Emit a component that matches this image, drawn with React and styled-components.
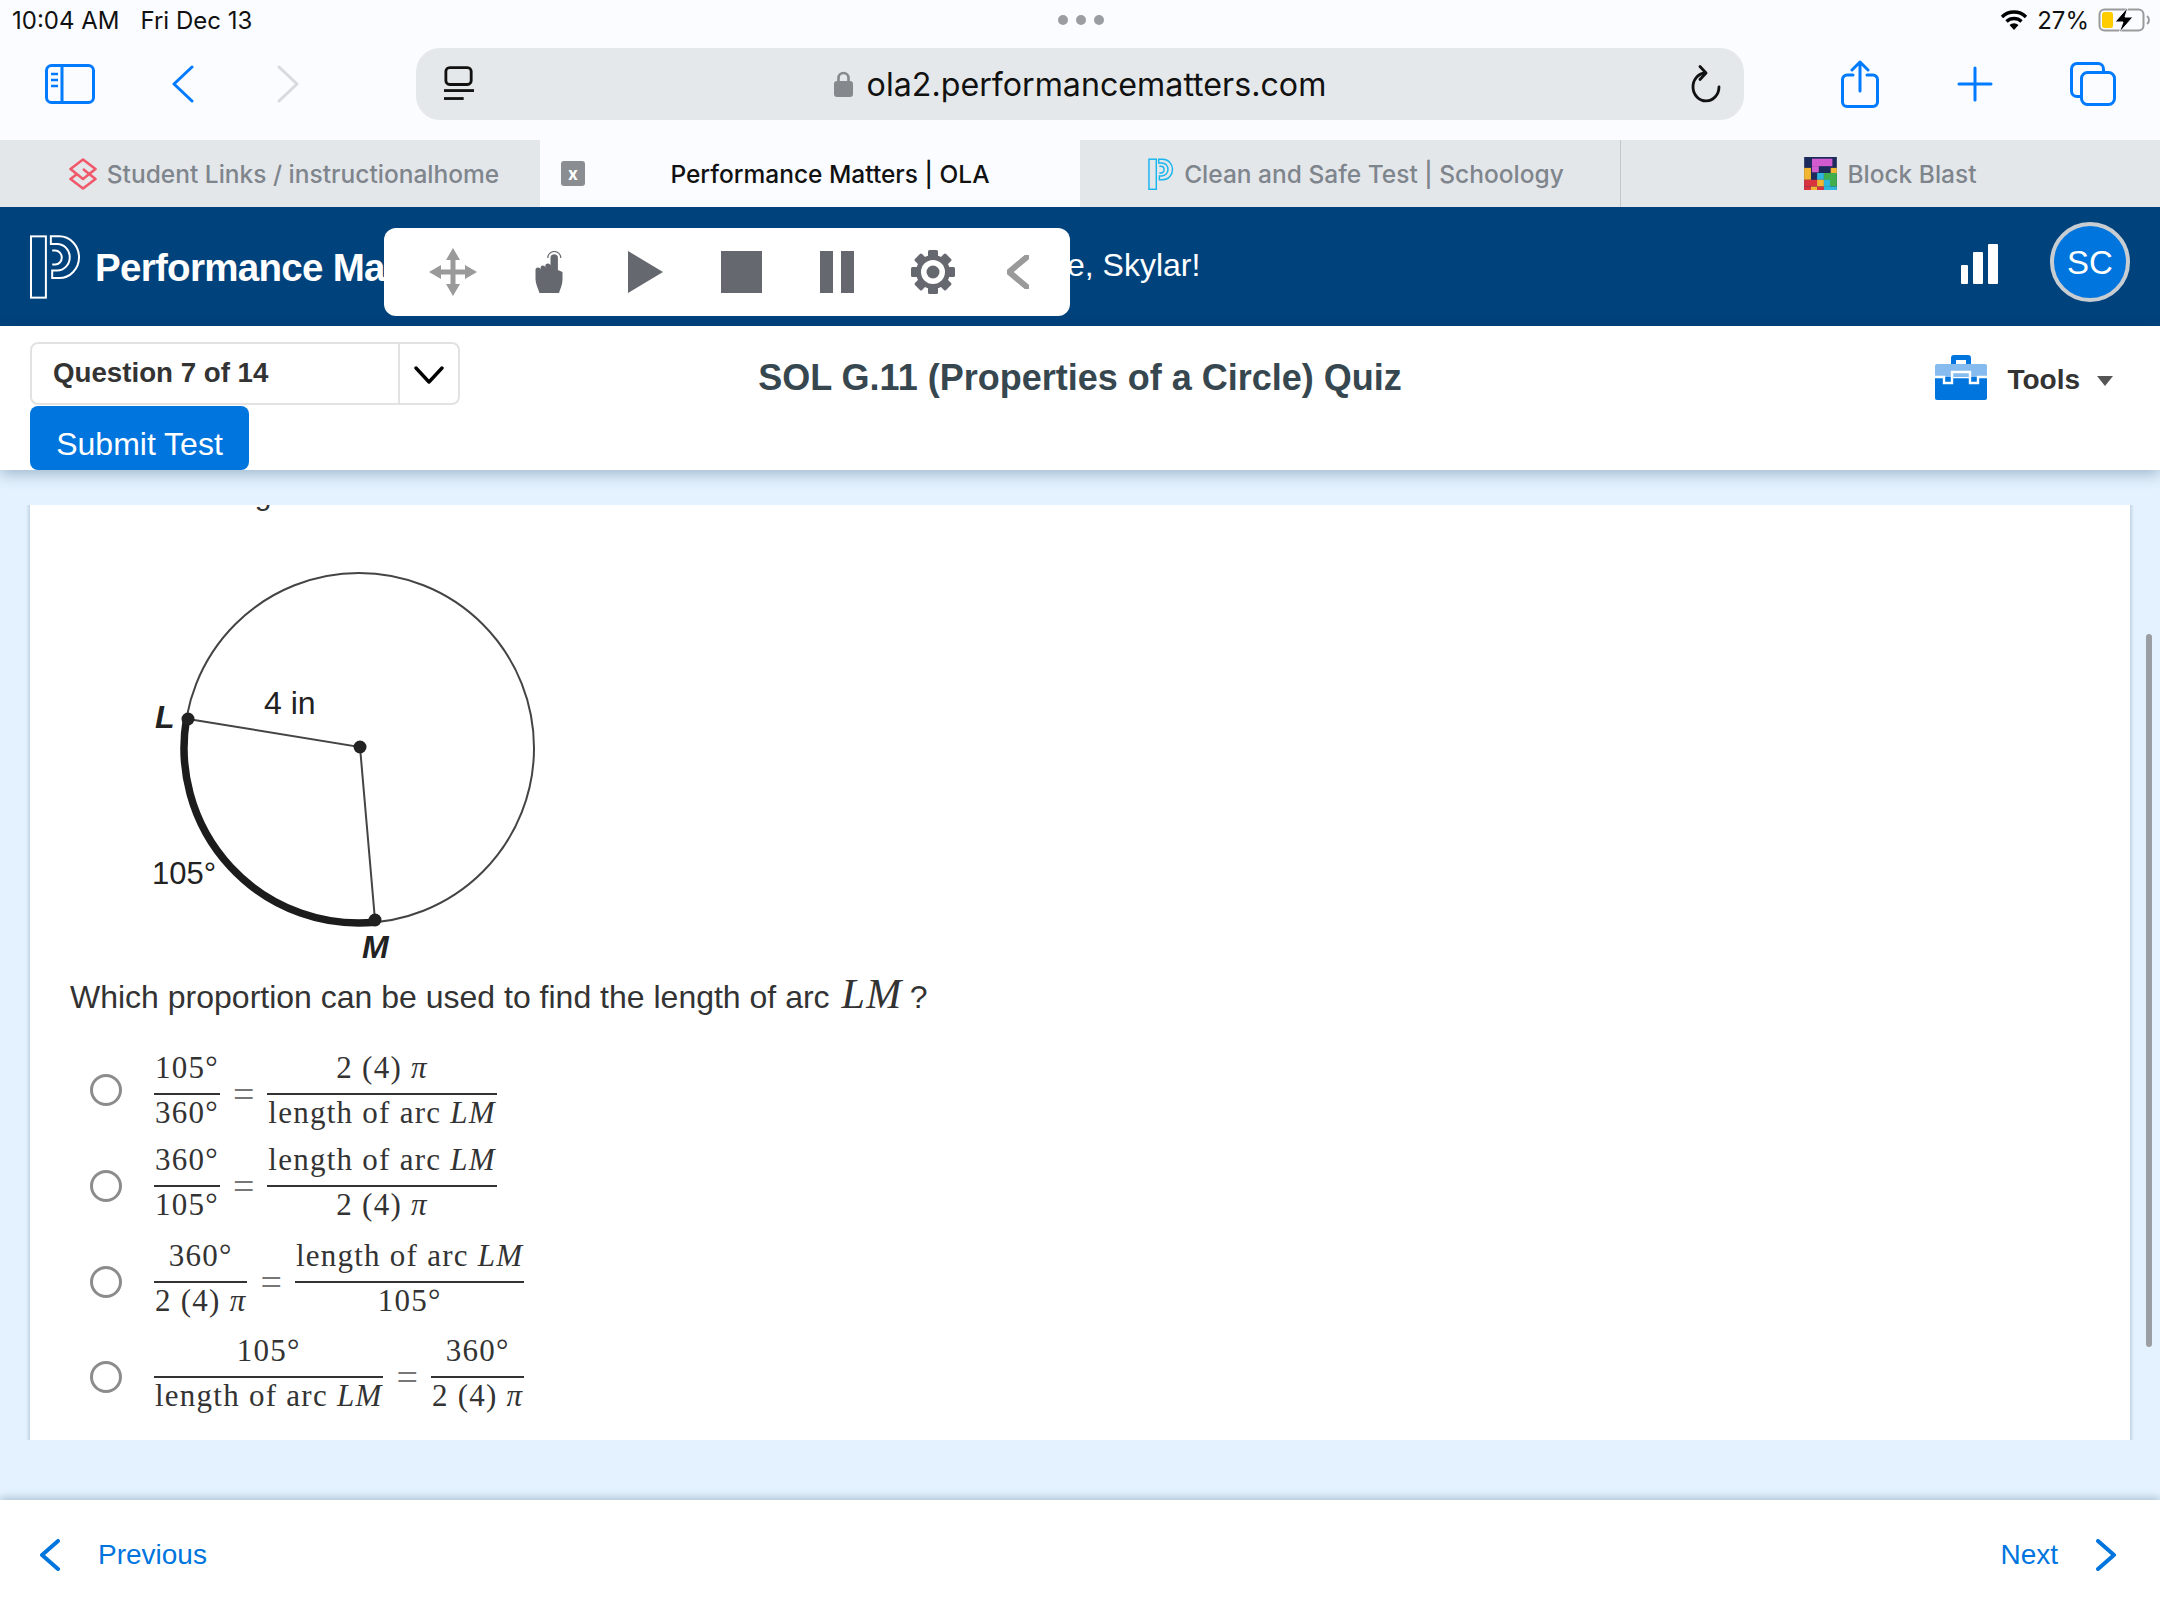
import React from "react";
import styled, { createGlobalStyle } from "styled-components";

const blue = "#0075de";
const safari = "#007aff";

const GlobalStyle = createGlobalStyle`
  html, body {
    margin: 0;
    padding: 0;
    background: #fff;
    font-family: "Liberation Sans", Arial, sans-serif;
  }
`;

const Page = styled.div`
  position: relative;
  width: 2160px;
  height: 1620px;
  display: flex;
  flex-direction: column;
  overflow: hidden;
`;

const StatusBar = styled.div`
  height: 40px;
  flex: none;
  background: #fafcff;
  display: grid;
  grid-template-columns: 1fr auto 1fr;
  align-items: center;
  padding: 0 10px 0 12px;
  font-family: Inter, sans-serif;
  font-size: 24px;
  color: #111;
`;

const StatusLeft = styled.div`
  display: flex;
  gap: 21px;
`;

const Dots = styled.div`
  display: flex;
  gap: 8px;
`;

const Dot = styled.span`
  width: 10px;
  height: 10px;
  border-radius: 50%;
  background: #9a9da1;
`;

const StatusRight = styled.div`
  display: flex;
  justify-content: flex-end;
  align-items: center;
  gap: 9px;
`;

const Toolbar = styled.div`
  height: 100px;
  flex: none;
  box-sizing: border-box;
  background: #fafcff;
  padding-top: 8px;
  display: flex;
  align-items: flex-start;
`;

const ToolIcon = styled.div`
  height: 72px;
  display: flex;
  align-items: center;
  margin-left: ${(p) => p.$gap}px;
`;

const UrlBar = styled.div`
  position: relative;
  width: 1328px;
  height: 72px;
  margin-left: ${(p) => p.$gap}px;
  border-radius: 24px;
  background: #e5e8ea;
  display: grid;
  grid-template-columns: 58px 1fr 58px;
  align-items: center;
`;

const UrlText = styled.div`
  display: flex;
  justify-content: center;
  align-items: center;
  gap: 14px;
  font-family: Inter, sans-serif;
  font-size: 32.2px;
  color: #111;
`;

const TabRow = styled.div`
  height: 67px;
  flex: none;
  display: grid;
  grid-template-columns: repeat(4, 1fr);
`;

const Tab = styled.div`
  position: relative;
  display: flex;
  align-items: center;
  justify-content: center;
  gap: 10px;
  box-sizing: border-box;
  padding-left: ${(p) => p.$offset || 0}px;
  background: ${(p) => (p.$active ? "#fafcff" : "#e4e7ea")};
  color: ${(p) => (p.$active ? "#111" : "#7f858c")};
  border-left: ${(p) => (p.$divider ? "1px solid #c4c7ca" : "none")};
  font-family: Inter, sans-serif;
  font-size: 24.5px;
  font-weight: 500;
`;

const TabClose = styled.span`
  position: absolute;
  left: 21px;
  top: 21px;
  width: 24px;
  height: 25px;
  border-radius: 3px;
  background: #8a8d91;
  color: #fff;
  font-size: 17px;
  font-weight: 700;
  display: flex;
  align-items: center;
  justify-content: center;
`;

const Header = styled.header`
  position: relative;
  height: 119px;
  flex: none;
  background: #00427c;
  color: #fff;
  display: grid;
  grid-template-columns: 952px 1fr auto;
  align-items: center;
  padding-right: 30px;
  box-sizing: border-box;
`;

const Brand = styled.div`
  display: flex;
  align-items: center;
  padding-left: 29px;
  gap: 13px;
  white-space: nowrap;
  font-size: 38.5px;
  font-weight: 700;
  letter-spacing: -0.7px;
`;

const BrandName = styled.span`
  margin-top: 3px;
`;

const Welcome = styled.div`
  font-size: 32px;
  margin-top: -3px;
`;

const HeaderActions = styled.div`
  display: flex;
  align-items: center;
  gap: 52px;
`;

const BarsSlot = styled.div`
  display: flex;
  margin-bottom: 6px;
`;

const Avatar = styled.div`
  width: 80px;
  height: 80px;
  box-sizing: border-box;
  border-radius: 50%;
  border: 4px solid #c8cdd2;
  background: ${blue};
  font-size: 33px;
  padding-top: 3px;
  display: flex;
  align-items: center;
  justify-content: center;
  margin-top: -10px;
`;

const Palette = styled.div`
  position: absolute;
  left: 384px;
  top: 21px;
  width: 686px;
  height: 88px;
  border-radius: 12px;
  background: #fff;
  display: grid;
  grid-template-columns: 21px repeat(6, 96px) 74px;
  align-items: center;
  justify-items: center;
`;

const PaletteCell = styled.div`
  display: flex;
  align-items: center;
  justify-content: center;
  grid-column: ${(p) => p.$col};
`;

const SubBar = styled.div`
  position: relative;
  z-index: 2;
  height: 144px;
  flex: none;
  background: #fff;
  box-shadow: 0 4px 14px rgba(0, 50, 90, 0.3);
  display: grid;
  grid-template-columns: 1fr auto 1fr;
  padding-top: 16px;
  box-sizing: border-box;
`;

const QuestionColumn = styled.div`
  padding-left: 30px;
`;

const QuestionSelect = styled.div`
  width: 430px;
  height: 63px;
  box-sizing: border-box;
  display: flex;
  border: 2px solid #e2e2e2;
  border-radius: 8px;
`;

const QuestionLabel = styled.div`
  flex: 1;
  display: flex;
  align-items: center;
  padding-left: 21px;
  font-size: 27.7px;
  font-weight: 700;
  color: #333;
  margin-top: -2px;
`;

const SelectToggle = styled.div`
  width: 58px;
  display: flex;
  align-items: center;
  justify-content: center;
  padding-top: 3px;
  border-left: 2px solid #e2e2e2;
`;

const SubmitButton = styled.button`
  display: block;
  width: 219px;
  height: 64px;
  margin-top: 1px;
  border: none;
  border-radius: 8px;
  background: ${blue};
  color: #fff;
  font-family: inherit;
  font-size: 32px;
  padding: 13px 0 0;
`;

const QuizTitle = styled.h1`
  margin: 0;
  font-size: 36px;
  line-height: 44px;
  margin-top: 14px;
  font-weight: 700;
  color: #37474f;
`;

const ToolsMenu = styled.div`
  display: flex;
  justify-content: flex-end;
  align-items: flex-start;
  padding: 13px 47px 0 0;
  font-size: 28px;
  font-weight: 700;
  color: #333;
`;

const ToolsLabel = styled.span`
  margin: 9px 17px 0 20px;
`;

const ToolsCaret = styled.span`
  width: 0;
  height: 0;
  margin-top: 21px;
  border-left: 8px solid transparent;
  border-right: 8px solid transparent;
  border-top: 10px solid #555;
`;

const Main = styled.main`
  position: relative;
  flex: 1;
  min-height: 0;
  background: #e3f2fe;
  padding: 35px 26px 60px;
  display: flex;
`;

const ScrollArea = styled.div`
  flex: 1;
  padding: 0 4px;
  overflow: hidden;
`;

const Card = styled.div`
  background: #fff;
  box-shadow: 0 0 5px rgba(0, 40, 80, 0.3);
  height: 1000px;
`;

const ClippedLine = styled.div`
  margin: -28px 0 27px 53px;
  font-size: 30px;
  line-height: 36px;
  color: #333;
`;

const Figure = styled.svg`
  display: block;
  margin-left: 90px;
`;

const Prompt = styled.p`
  margin: -8px 0 0 40px;
  height: 78px;
  font-size: 32px;
  line-height: 44px;
  color: #333;
`;

const PromptVar = styled.i`
  font-family: "Liberation Serif", serif;
  font-size: 42px;
  margin: 0 7px 0 3px;
  letter-spacing: 1.5px;
`;

const OptionRow = styled.div`
  height: ${(p) => p.$height}px;
  display: flex;
  align-items: center;
  padding-left: 60px;
`;

const Radio = styled.span`
  width: 32px;
  height: 32px;
  box-sizing: border-box;
  border-radius: 50%;
  border: 3px solid #8c8c8c;
  margin-top: ${(p) => p.$lift || 0}px;
  margin-right: 32px;
`;

const Equation = styled.div`
  display: flex;
  align-items: center;
  font-family: "Liberation Serif", serif;
  font-size: 31px;
  letter-spacing: 1.25px;
  color: #333;
  white-space: nowrap;
`;

const Fraction = styled.div`
  display: inline-flex;
  flex-direction: column;
  text-align: center;
`;

const Numerator = styled.div`
  padding: 1px 1px 6px;
  line-height: 38px;
  border-bottom: 2px solid #333;
`;

const Denominator = styled.div`
  margin-top: -1px;
  padding: 0 1px 8px;
  line-height: 38px;
`;

const Equals = styled.span`
  margin: 0 13px;
  font-size: 38px;
  color: #777;
  letter-spacing: 0;
  line-height: 1;
`;

const ScrollThumb = styled.div`
  position: absolute;
  right: 8px;
  top: 164px;
  width: 6px;
  height: 713px;
  border-radius: 3px;
  background: #9b9fa3;
`;

const Footer = styled.footer`
  position: relative;
  z-index: 2;
  height: 120px;
  flex: none;
  box-sizing: border-box;
  background: #fff;
  box-shadow: 0 -2px 8px rgba(0, 40, 80, 0.25);
  display: flex;
  justify-content: space-between;
  align-items: center;
  padding: 0 44px 10px 40px;
  color: ${blue};
  font-size: 28px;
`;

const FooterLink = styled.div`
  display: flex;
  align-items: center;
  gap: ${(p) => p.$gap}px;
`;

const Wifi = () => (
  <svg width="28" height="22" viewBox="0 0 28 22" fill="none" stroke="#000" strokeWidth="3.4">
    <path d="M2 8 A17 17 0 0 1 26 8" />
    <path d="M6.5 12.5 A11 11 0 0 1 21.5 12.5" />
    <path d="M14 21 L9.5 16 A6.5 6.5 0 0 1 18.5 16 Z" fill="#000" stroke="none" />
  </svg>
);

const Battery = () => (
  <svg width="52" height="26" viewBox="0 0 52 26" fill="none">
    <rect x="1.5" y="2.5" width="44" height="21" rx="5" stroke="#9a9a9a" strokeWidth="2" />
    <rect x="4" y="5" width="11" height="16" rx="2.5" fill="#ffcc00" />
    <path d="M49 9 a5 5 0 0 1 0 8" stroke="#9a9a9a" strokeWidth="2" />
    <path d="M30 0 L17 15 H25 L21 26 L35 10 H27 Z" fill="#000" stroke="#fafcff" strokeWidth="1" />
  </svg>
);

const SidebarIcon = () => (
  <svg width="50" height="40" viewBox="0 0 50 40" fill="none" stroke={safari} strokeWidth="3">
    <rect x="1.5" y="1.5" width="47" height="37" rx="5" />
    <path d="M17 1.5 V38.5" />
    <path d="M6 10 H13 M6 16 H13 M6 22 H13" strokeWidth="2.4" />
  </svg>
);

const Chevron = ({ dir = "left", color, width, height, stroke }) => (
  <svg width={width} height={height} viewBox={`0 0 ${width} ${height}`} fill="none" stroke={color} strokeWidth={stroke} strokeLinecap="round" strokeLinejoin="round">
    {dir === "left" ? (
      <path d={`M${width - 2} 2 L2 ${height / 2} L${width - 2} ${height - 2}`} />
    ) : (
      <path d={`M2 2 L${width - 2} ${height / 2} L2 ${height - 2}`} />
    )}
  </svg>
);

const ReaderIcon = () => (
  <svg width="32" height="38" viewBox="0 0 32 38">
    <rect x="2" y="1.5" width="27" height="18" rx="4" fill="none" stroke="#111" strokeWidth="3" />
    <path d="M0 26 H32" stroke="#111" strokeWidth="3" />
    <path d="M0 34.5 H21" stroke="#111" strokeWidth="3" />
  </svg>
);

const LockIcon = () => (
  <svg width="19" height="26" viewBox="0 0 19 26">
    <path d="M4.5 11 V7 a5 5 0 0 1 10 0 V11" fill="none" stroke="#85888c" strokeWidth="2.6" />
    <rect x="0" y="10" width="19" height="16" rx="3" fill="#85888c" />
  </svg>
);

const ReloadIcon = () => (
  <svg width="32" height="38" viewBox="0 0 32 38" fill="none" stroke="#111" strokeWidth="2.8" strokeLinecap="round" strokeLinejoin="round">
    <path d="M15 8 A13 14 0 1 0 29 22" />
    <path d="M10 1.5 L16 8 L10 14.5" />
  </svg>
);

const ShareIcon = () => (
  <svg width="38" height="48" viewBox="0 0 38 48" fill="none" stroke={safari} strokeWidth="3" strokeLinecap="round" strokeLinejoin="round">
    <path d="M12 15 H6 a4.5 4.5 0 0 0 -4.5 4.5 V42 a4.5 4.5 0 0 0 4.5 4.5 H32 a4.5 4.5 0 0 0 4.5 -4.5 V19.5 a4.5 4.5 0 0 0 -4.5 -4.5 H26" />
    <path d="M19 31 V2 M11 10 L19 2 L27 10" />
  </svg>
);

const PlusIcon = () => (
  <svg width="36" height="36" viewBox="0 0 36 36" stroke={safari} strokeWidth="3" strokeLinecap="round">
    <path d="M18 2 V34 M2 18 H34" />
  </svg>
);

const TabsIcon = () => (
  <svg width="46" height="44" viewBox="0 0 46 44" fill="none" stroke={safari} strokeWidth="3">
    <path d="M11 34.5 H7 a5.5 5.5 0 0 1 -5.5 -5.5 V7 a5.5 5.5 0 0 1 5.5 -5.5 H28 a5.5 5.5 0 0 1 5.5 5.5 V10" />
    <rect x="11.5" y="10.5" width="33" height="32" rx="6" />
  </svg>
);

const DiamondsIcon = () => (
  <svg width="28" height="32" viewBox="0 0 28 32" fill="none" stroke="#f0596b" strokeWidth="2.6" strokeLinejoin="round">
    <path d="M14 1.5 L26.5 11 L14 21 L1.5 11 Z" />
    <path d="M8 16 L1.5 21 L14 30.5 L26.5 21 L14 11" />
  </svg>
);

const PLogo = ({ color = "#fff", width, height, stroke = 6 }) => (
  <svg width={width} height={height} viewBox="27 30 160 196" fill="none" stroke={color} strokeWidth={stroke}>
    <rect x="33" y="37" width="45" height="185" />
    <path d="M93 37 H118 A60 63 0 0 1 118 163 H97 V140 H112 A38 40 0 0 0 112 60 H93 Z" />
    <path d="M97 80 H106 A20 21 0 0 1 106 122 H97" />
  </svg>
);

const BLOCKS = [
  ["#1d2a5c", 0, 0, 96, 97],
  ["#d25ccf", 23, 5, 60, 22],
  ["#d25ccf", 23, 27, 20, 18],
  ["#f2b632", 0, 32, 20, 35],
  ["#f2b632", 78, 32, 18, 18],
  ["#2fb6de", 38, 47, 20, 20],
  ["#3fae4b", 58, 47, 38, 40],
  ["#d9333f", 0, 67, 38, 20],
  ["#f2b632", 38, 67, 20, 20],
  ["#2fb6de", 58, 67, 18, 20],
  ["#d9333f", 0, 87, 20, 10],
  ["#f2b632", 20, 87, 18, 10],
  ["#d9333f", 38, 87, 20, 10],
  ["#2fb6de", 58, 87, 38, 10],
];

const BlockIcon = () => (
  <svg width="33" height="33" viewBox="0 0 96 97">
    {BLOCKS.map(([fill, x, y, w, h], i) => (
      <rect key={i} x={x} y={y} width={w} height={h} fill={fill} />
    ))}
  </svg>
);

const MoveIcon = () => (
  <svg width="48" height="48" viewBox="0 0 48 48" fill="#9a9a9a">
    <path d="M24 0 L31 12 H26.5 V21.5 H36 V17 L48 24 L36 31 V26.5 H26.5 V36 H31 L24 48 L17 36 H21.5 V26.5 H12 V31 L0 24 L12 17 V21.5 H21.5 V12 H17 Z" />
  </svg>
);

const HandIcon = () => (
  <svg width="28" height="42" viewBox="0 0 28 42">
    <path d="M12.8 7 a6.5 6.5 0 0 1 13 0" fill="none" stroke="#666870" strokeWidth="1.2" />
    <path d="M15.5 7 a3.7 3.7 0 0 1 7.4 0 V19 L27.5 21 V29 C27.5 34 25 38 24 42 H4.5 C3 37 0.5 33 0.5 28 V19 a2.4 2.4 0 0 1 5 0 V17 a2.4 2.4 0 0 1 4.8 0 V15 a2.6 2.6 0 0 1 5.2 0 Z" fill="#666870" />
  </svg>
);

const PlayIcon = () => (
  <svg width="35" height="42" viewBox="0 0 35 42" fill="#666870">
    <path d="M0 0 L35 21 L0 42 Z" />
  </svg>
);

const StopIcon = () => (
  <svg width="41" height="42" viewBox="0 0 41 42" fill="#666870">
    <rect width="41" height="42" />
  </svg>
);

const PauseIcon = () => (
  <svg width="34" height="42" viewBox="0 0 34 42" fill="#666870">
    <rect width="13" height="42" />
    <rect x="21" width="13" height="42" />
  </svg>
);

const GearIcon = () => (
  <svg width="44" height="44" viewBox="-22 -22 44 44">
    {[0, 45, 90, 135, 180, 225, 270, 315].map((a) => (
      <rect key={a} x="-5" y="-22" width="10" height="10" rx="1.5" fill="#666870" transform={`rotate(${a})`} />
    ))}
    <circle r="17" fill="#666870" />
    <circle r="12" fill="#fff" />
    <circle r="6.5" fill="#666870" />
  </svg>
);

const BarsIcon = () => (
  <svg width="37" height="40" viewBox="0 0 37 40" fill="#fff">
    <rect x="0" y="21" width="7" height="19" rx="1" />
    <rect x="12" y="8" width="10" height="32" rx="1" />
    <rect x="27" y="0" width="10" height="40" rx="1" />
  </svg>
);

const BriefcaseIcon = () => (
  <svg width="52" height="45" viewBox="0 0 52 45">
    <path d="M16 10 V3 a3 3 0 0 1 3 -3 H33 a3 3 0 0 1 3 3 V10 H31 V5 H21 V10 Z" fill={blue} />
    <path d="M2 9 H50 a2 2 0 0 1 2 2 V22 H0 V11 a2 2 0 0 1 2 -2 Z" fill="#85bbee" />
    <path d="M0 22 H52 V43 a2 2 0 0 1 -2 2 H2 a2 2 0 0 1 -2 -2 Z" fill={blue} />
    <path d="M0 22 H9 V28 H17 V22 H35 V28 H43 V22 H52" fill="none" stroke="#fff" strokeWidth="2.4" />
    <path d="M17 22 V17 H35 V22" fill="#85bbee" stroke="#fff" strokeWidth="2.4" />
  </svg>
);

const CircleFigure = () => (
  <Figure width="460" height="440" viewBox="0 0 460 440" fill="#222" fontFamily="Liberation Sans, sans-serif">
    <circle cx="239" cy="208" r="175" fill="none" stroke="#444" strokeWidth="2" />
    <path d="M66.5 178.7 A175 175 0 0 0 255.2 382.3" fill="none" stroke="#1c1c1c" strokeWidth="7.5" />
    <path d="M68 179 L240 207 L255 380" fill="none" stroke="#444" strokeWidth="2" />
    <circle cx="68" cy="179" r="6.5" />
    <circle cx="240" cy="207" r="6.5" />
    <circle cx="255" cy="380" r="6.5" />
    <text x="35" y="188" fontSize="32" fontWeight="700" fontStyle="italic">L</text>
    <text x="144" y="174" fontSize="32">4 in</text>
    <text x="32" y="344" fontSize="31">105°</text>
    <text x="242" y="418" fontSize="32" fontWeight="700" fontStyle="italic">M</text>
  </Figure>
);

const ArcLength = () => (
  <>
    length of arc <i>LM</i>
  </>
);

const TwoFourPi = () => (
  <>
    2 (4) <i>π</i>
  </>
);

const OPTIONS = [
  { height: 88, lift: -8, left: ["105°", "360°"], right: [<TwoFourPi />, <ArcLength />] },
  { height: 96, left: ["360°", "105°"], right: [<ArcLength />, <TwoFourPi />] },
  { height: 96, left: ["360°", <TwoFourPi />], right: [<ArcLength />, "105°"] },
  { height: 94, left: ["105°", <ArcLength />], right: ["360°", <TwoFourPi />] },
];

const Frac = ({ parts }) => (
  <Fraction>
    <Numerator>{parts[0]}</Numerator>
    <Denominator>{parts[1]}</Denominator>
  </Fraction>
);

export default function App() {
  return (
    <Page>
      <GlobalStyle />
      <StatusBar>
        <StatusLeft>
          <span>10:04 AM</span>
          <span>Fri Dec 13</span>
        </StatusLeft>
        <Dots>
          <Dot />
          <Dot />
          <Dot />
        </Dots>
        <StatusRight>
          <Wifi />
          <span>27%</span>
          <Battery />
        </StatusRight>
      </StatusBar>

      <Toolbar>
        <ToolIcon $gap={45}>
          <SidebarIcon />
        </ToolIcon>
        <ToolIcon $gap={77}>
          <Chevron color={safari} width={22} height={38} stroke={3} />
        </ToolIcon>
        <ToolIcon $gap={83}>
          <Chevron dir="right" color="#d8dbde" width={22} height={38} stroke={3} />
        </ToolIcon>
        <UrlBar $gap={117}>
          <ToolIcon $gap={28}>
            <ReaderIcon />
          </ToolIcon>
          <UrlText>
            <LockIcon />
            ola2.performancematters.com
          </UrlText>
          <ToolIcon $gap={4}>
            <ReloadIcon />
          </ToolIcon>
        </UrlBar>
        <ToolIcon $gap={97}>
          <ShareIcon />
        </ToolIcon>
        <ToolIcon $gap={78}>
          <PlusIcon />
        </ToolIcon>
        <ToolIcon $gap={77}>
          <TabsIcon />
        </ToolIcon>
      </Toolbar>

      <TabRow>
        <Tab $offset={28}>
          <DiamondsIcon />
          Student Links / instructionalhome
        </Tab>
        <Tab $active $offset={40}>
          <TabClose>x</TabClose>
          Performance Matters | OLA
        </Tab>
        <Tab $offset={12}>
          <PLogo color="#19b5ee" width={26} height={32} stroke={9} />
          Clean and Safe Test | Schoology
        </Tab>
        <Tab $divider>
          <BlockIcon />
          Block Blast
        </Tab>
      </TabRow>

      <Header>
        <Brand>
          <PLogo width={53} height={65} />
          <BrandName>Performance Matters</BrandName>
        </Brand>
        <Welcome>Welcome, Skylar!</Welcome>
        <HeaderActions>
          <BarsSlot>
            <BarsIcon />
          </BarsSlot>
          <Avatar>SC</Avatar>
        </HeaderActions>
        <Palette>
          <PaletteCell $col={2}>
            <MoveIcon />
          </PaletteCell>
          <PaletteCell $col={3}>
            <HandIcon />
          </PaletteCell>
          <PaletteCell $col={4}>
            <PlayIcon />
          </PaletteCell>
          <PaletteCell $col={5}>
            <StopIcon />
          </PaletteCell>
          <PaletteCell $col={6}>
            <PauseIcon />
          </PaletteCell>
          <PaletteCell $col={7}>
            <GearIcon />
          </PaletteCell>
          <PaletteCell $col={8}>
            <Chevron color="#9a9a9a" width={22} height={34} stroke={6} />
          </PaletteCell>
        </Palette>
      </Header>

      <SubBar>
        <QuestionColumn>
          <QuestionSelect>
            <QuestionLabel>Question 7 of 14</QuestionLabel>
            <SelectToggle>
              <svg width="30" height="18" viewBox="0 0 30 18" fill="none" stroke="#000" strokeWidth="3.4" strokeLinecap="round" strokeLinejoin="round">
                <path d="M2 2 L15 16 L28 2" />
              </svg>
            </SelectToggle>
          </QuestionSelect>
          <SubmitButton>Submit Test</SubmitButton>
        </QuestionColumn>
        <QuizTitle>SOL G.11 (Properties of a Circle) Quiz</QuizTitle>
        <ToolsMenu>
          <BriefcaseIcon />
          <ToolsLabel>Tools</ToolsLabel>
          <ToolsCaret />
        </ToolsMenu>
      </SubBar>

      <Main>
        <ScrollArea>
          <Card>
            <ClippedLine>Look at the figure.</ClippedLine>
            <CircleFigure />
            <Prompt>
              Which proportion can be used to find the length of arc <PromptVar>LM</PromptVar>?
            </Prompt>
            {OPTIONS.map((option, i) => (
              <OptionRow key={i} $height={option.height}>
                <Radio $lift={option.lift} />
                <Equation>
                  <Frac parts={option.left} />
                  <Equals>=</Equals>
                  <Frac parts={option.right} />
                </Equation>
              </OptionRow>
            ))}
          </Card>
        </ScrollArea>
        <ScrollThumb />
      </Main>

      <Footer>
        <FooterLink $gap={38}>
          <Chevron color={blue} width={20} height={32} stroke={4} />
          Previous
        </FooterLink>
        <FooterLink $gap={38}>
          Next
          <Chevron dir="right" color={blue} width={20} height={32} stroke={4} />
        </FooterLink>
      </Footer>
    </Page>
  );
}
